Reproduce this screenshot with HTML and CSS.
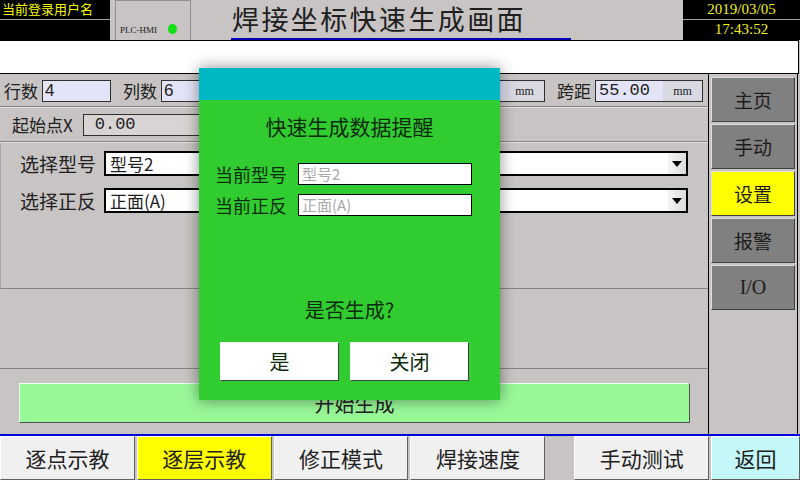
FILE: index.html
```html
<!DOCTYPE html>
<html lang="zh-CN">
<head>
    <meta charset="UTF-8">
    <title>焊接坐标快速生成画面</title>
    <link rel="stylesheet" href="styles.css">
</head>
<body>
    <div class="pantalla">
        <header class="cabecera">
            <div class="usuario">
                <div class="usuario-nombre">当前登录用户名</div>
            </div>
            <div class="plc">
                <span class="plc-texto">PLC-HMI</span>
                <span class="led"></span>
            </div>
            <div class="titulo-zona">
                <h1 class="titulo">焊接坐标快速生成画面</h1>
            </div>
            <div class="reloj">
                <div class="fecha">2019/03/05</div>
                <div class="hora">17:43:52</div>
            </div>
        </header>

        <div class="mensaje"></div>

        <main class="principal">
            <section class="contenido">
                <div class="fila fila-uno">
                    <span class="etiqueta">行数</span>
                    <span class="campo campo-corto">4</span>
                    <span class="etiqueta etiqueta-sep">列数</span>
                    <span class="campo campo-corto">6</span>
                    <div class="grupo-derecha">
                        <span class="etiqueta">行距</span>
                        <span class="campo campo-unidad"><span class="valor">55.00</span><span class="unidad">mm</span></span>
                        <span class="etiqueta etiqueta-ancha">跨距</span>
                        <span class="campo campo-unidad"><span class="valor">55.00</span><span class="unidad">mm</span></span>
                    </div>
                </div>

                <div class="fila fila-dos">
                    <span class="etiqueta">起始点X</span>
                    <span class="campo campo-gris">0.00</span>
                </div>

                <div class="panel-seleccion">
                    <div class="seleccion">
                        <span class="etiqueta etiqueta-grande">选择型号</span>
                        <div class="lista">
                            <span>型号2</span>
                            <span class="flecha"></span>
                        </div>
                    </div>
                    <div class="seleccion">
                        <span class="etiqueta etiqueta-grande">选择正反</span>
                        <div class="lista">
                            <span>正面(A)</span>
                            <span class="flecha"></span>
                        </div>
                    </div>
                </div>

                <div class="hueco"></div>

                <div class="panel-boton">
                    <button class="generar">开始生成</button>
                </div>
            </section>

            <nav class="lateral">
                <button class="lateral-boton">主页</button>
                <button class="lateral-boton">手动</button>
                <button class="lateral-boton activo">设置</button>
                <button class="lateral-boton">报警</button>
                <button class="lateral-boton latino">I/O</button>
            </nav>
        </main>

        <footer class="pestanas">
            <button class="pestana">逐点示教</button>
            <button class="pestana activo">逐层示教</button>
            <button class="pestana">修正模式</button>
            <button class="pestana">焊接速度</button>
            <div class="pestana-hueco"></div>
            <button class="pestana">手动测试</button>
            <button class="pestana volver">返回</button>
        </footer>

        <div class="dialogo">
            <div class="dialogo-cabeza"></div>
            <div class="dialogo-cuerpo">
                <div class="dialogo-titulo">快速生成数据提醒</div>
                <div class="dialogo-campos">
                    <div class="dialogo-fila">
                        <span class="dialogo-etiqueta">当前型号</span>
                        <span class="dialogo-campo">型号2</span>
                    </div>
                    <div class="dialogo-fila">
                        <span class="dialogo-etiqueta">当前正反</span>
                        <span class="dialogo-campo">正面(A)</span>
                    </div>
                </div>
                <div class="dialogo-pregunta">是否生成?</div>
                <div class="dialogo-botones">
                    <button class="dialogo-boton">是</button>
                    <button class="dialogo-boton">关闭</button>
                </div>
            </div>
        </div>
    </div>
</body>
</html>
```

FILE: styles.css
```css
body {
    margin: 0;
    padding: 0;
    background-color: #c8c4c4;
    font-family: "Noto Sans CJK SC", "Noto Sans", sans-serif;
    color: #202020;
}

button {
    font-family: inherit;
    color: inherit;
    cursor: pointer;
}

.pantalla {
    width: 800px;
    height: 480px;
    position: relative;
    overflow: hidden;
    background-color: #c8c4c4;
}

/* cabecera */
.cabecera {
    display: flex;
    height: 40px;
}

.usuario {
    width: 110px;
    background-color: #000;
}

.usuario-nombre {
    height: 20px;
    line-height: 17px;
    padding-left: 2px;
    font-size: 13px;
    color: #f8f800;
    border-bottom: 1px solid #a0a0a0;
    box-sizing: border-box;
}

.plc {
    width: 76px;
    margin-left: 5px;
    box-sizing: border-box;
    border: 1px solid #909090;
    border-bottom: none;
    display: flex;
    align-items: flex-end;
    padding: 0 0 5px 4px;
    gap: 11px;
}

.plc-texto {
    font-family: "Liberation Serif", serif;
    font-size: 9px;
    line-height: 10px;
}

.led {
    width: 9px;
    height: 10px;
    border-radius: 50%;
    background-color: #10e010;
    margin-bottom: 1px;
}

.titulo-zona {
    flex: 1;
    padding-left: 40px;
}

.titulo {
    margin: 0;
    width: 340px;
    height: 40px;
    box-sizing: border-box;
    border-bottom: 2px solid #0000b8;
    font-size: 27px;
    letter-spacing: 2.4px;
    font-weight: normal;
    line-height: 38px;
    padding-left: 1px;
    color: #202020;
    white-space: nowrap;
}

.reloj {
    width: 117px;
    background-color: #000;
    color: #f0f020;
    font-family: "Liberation Serif", serif;
    font-size: 15px;
    text-align: center;
}

.fecha {
    height: 20px;
    line-height: 19px;
    border-bottom: 1px solid #a0a0a0;
    box-sizing: border-box;
}

.hora {
    line-height: 19px;
}

/* barra de mensajes */
.mensaje {
    height: 34px;
    background-color: #fff;
    border: 1px solid #000;
    border-left: none;
    box-sizing: border-box;
    margin-right: 1px;
}

/* zona principal */
.principal {
    display: flex;
    height: 360px;
}

.contenido {
    width: 708px;
    display: flex;
    flex-direction: column;
}

.etiqueta {
    font-size: 17px;
    line-height: 22px;
    white-space: nowrap;
}

.etiqueta-sep {
    margin-left: 8px;
}

.etiqueta-grande {
    font-size: 19px;
}

.fila {
    display: flex;
    align-items: center;
    gap: 4px;
    border-bottom: 1px solid #888484;
    box-shadow: 0 1px 0 #e4e0e0;
}

.fila-uno {
    height: 33px;
    padding: 1px 5px 0 4px;
    box-sizing: border-box;
}

.grupo-derecha {
    margin-left: auto;
    display: flex;
    align-items: center;
    gap: 4px;
}

.etiqueta-ancha {
    margin-left: 8px;
}

.fila-dos {
    height: 34px;
    margin-top: 1px;
    padding-left: 12px;
    box-sizing: border-box;
}

.campo {
    height: 22px;
    line-height: 20px;
    box-sizing: border-box;
    border: 1px solid #303030;
    background-color: #e4e4f8;
    font-family: "Liberation Sans", sans-serif;
    font-size: 17px;
    padding-left: 2px;
}

.campo-corto {
    width: 69px;
}

.campo-unidad {
    width: 108px;
    display: flex;
    padding-left: 0;
}

.valor {
    flex: 1;
    padding-left: 3px;
    font-family: "Liberation Mono", monospace;
    font-size: 17px;
}

.unidad {
    width: 39px;
    box-sizing: border-box;
    text-align: center;
    font-family: "Liberation Serif", serif;
    font-size: 12px;
    background-color: #d8d8e2;
}

.campo-unidad:first-of-type .unidad {
    border-left: 1px solid #303030;
    background-color: #d0cccc;
}

.campo-gris {
    width: 140px;
    margin-left: 6px;
    background-color: #d8d4d4;
    font-family: "Liberation Mono", monospace;
    padding-left: 11px;
}

.panel-seleccion {
    height: 146px;
    margin-top: 1px;
    box-sizing: border-box;
    border-bottom: 1px solid #888484;
    border-left: 1px solid #a8a4a4;
    padding: 8px 0 0 19px;
    display: flex;
    flex-direction: column;
    gap: 12px;
}

.seleccion {
    display: flex;
    align-items: center;
    gap: 8px;
}

.lista {
    width: 584px;
    height: 25px;
    box-sizing: border-box;
    border: 2px solid #000;
    background-color: #fff;
    display: flex;
    align-items: center;
    justify-content: space-between;
    padding-left: 4px;
    font-size: 17px;
}

.flecha {
    width: 18px;
    height: 21px;
    background: linear-gradient(to right, #f4f4f4, #dcdcdc);
    position: relative;
}

.flecha::after {
    content: "";
    position: absolute;
    left: 4px;
    top: 8px;
    border-style: solid;
    border-width: 6px 5px 0;
    border-color: #000 transparent transparent;
}

.hueco {
    height: 79px;
    border-bottom: 1px solid #888484;
}

.panel-boton {
    flex: 1;
    padding: 14px 18px 0 19px;
}

.generar {
    width: 671px;
    height: 40px;
    background-color: #98f898;
    border: 1px solid #505050;
    border-top-color: #e8ffe8;
    border-left-color: #e8ffe8;
    font-size: 20px;
}

/* navegación lateral */
.lateral {
    width: 90px;
    box-sizing: border-box;
    border-left: 1px solid #000;
    border-right: 1px solid #000;
    display: flex;
    flex-direction: column;
    gap: 2px;
    padding: 3px 2px 0 2px;
}

.lateral-boton {
    height: 45px;
    background-color: #808080;
    border: 1px solid #404040;
    border-top-color: #dcdcdc;
    border-left-color: #dcdcdc;
    font-size: 19px;
    color: #1c1c1c;
}

.lateral-boton.activo {
    background-color: #ffff00;
}

.latino {
    font-family: "Liberation Serif", serif;
    font-size: 20px;
}

/* pestañas inferiores */
.pestanas {
    display: flex;
    gap: 2px;
    height: 46px;
    border-top: 2px solid #0000d8;
    box-sizing: border-box;
}

.pestana {
    width: 135px;
    background-color: #f0f0f0;
    border: 1px solid #606060;
    border-top-color: #fff;
    border-left-color: #fff;
    font-size: 21px;
}

.pestana.activo {
    background-color: #ffff00;
}

.pestana-hueco {
    width: 25px;
}

.pestana.volver {
    width: 89px;
    background-color: #c4f8f8;
}

/* diálogo */
.dialogo {
    position: absolute;
    left: 199px;
    top: 68px;
    width: 301px;
    height: 332px;
    box-shadow: 0 0 14px rgba(0, 0, 0, 0.45);
    display: flex;
    flex-direction: column;
}

.dialogo-cabeza {
    height: 32px;
    background-color: #00b8c4;
}

.dialogo-cuerpo {
    flex: 1;
    background-color: #30cc30;
    display: flex;
    flex-direction: column;
    color: #0c2a0c;
}

.dialogo-titulo {
    margin-top: 14px;
    text-align: center;
    font-size: 21px;
    line-height: 24px;
}

.dialogo-campos {
    margin-top: 25px;
    display: flex;
    flex-direction: column;
    gap: 9px;
}

.dialogo-fila {
    display: flex;
    align-items: center;
    padding-left: 16px;
    gap: 11px;
}

.dialogo-etiqueta {
    font-size: 18px;
    line-height: 22px;
}

.dialogo-campo {
    width: 174px;
    height: 22px;
    box-sizing: border-box;
    border: 1px solid #000;
    background-color: #fff;
    color: #a8a8a8;
    font-size: 15px;
    line-height: 20px;
    padding-left: 3px;
}

.dialogo-pregunta {
    margin-top: 82px;
    text-align: center;
    font-size: 20px;
    line-height: 24px;
}

.dialogo-botones {
    margin-top: 20px;
    display: flex;
    gap: 11px;
    padding-left: 21px;
}

.dialogo-boton {
    width: 119px;
    height: 39px;
    background-color: #fff;
    border: 1px solid #404040;
    border-top-color: #fff;
    border-left-color: #fff;
    font-size: 20px;
}
```
